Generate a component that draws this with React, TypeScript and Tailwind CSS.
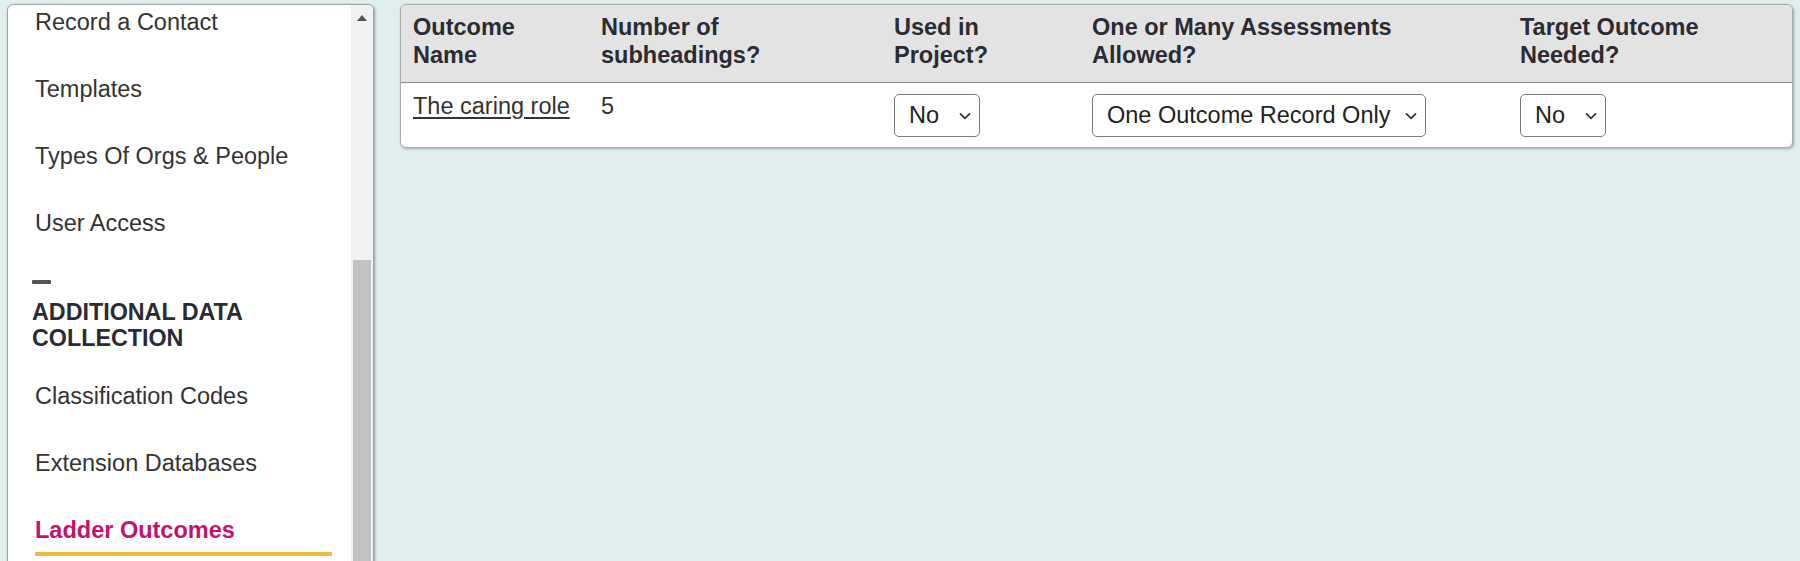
import React from "react";

function Chevron() {
  return (
    <svg width="12" height="8" viewBox="0 0 12 8" className="shrink-0">
      <path d="M1.5 1.8l4.5 4.5 4.5-4.5" fill="none" stroke="#333" strokeWidth="1.7" strokeLinecap="round" strokeLinejoin="round" />
    </svg>
  );
}

function Select({ value, width }: { value: string; width: string }) {
  return (
    <div
      className={`mt-[1px] inline-flex h-[43px] ${width} items-center justify-between rounded-[5px] border border-[#7a7a7a] bg-white pl-[14px] pr-[8px] text-[23.5px] text-[#222]`}
    >
      <span>{value}</span>
      <Chevron />
    </div>
  );
}

const items1 = ["Record a Contact", "Templates", "Types Of Orgs & People", "User Access"];
const items2 = ["Classification Codes", "Extension Databases"];

export default function App() {
  return (
    <div className="flex h-[561px] w-[1800px] items-start overflow-hidden bg-[#e0eeee] pt-[4px] font-['Liberation_Sans',Arial,sans-serif] text-[#333]">
      <aside className="ml-[7px] flex h-[600px] w-[367px] shrink-0 overflow-hidden rounded-[6px] border border-[#9ca4a4] bg-white shadow-[1px_1px_3px_rgba(0,0,0,0.35)]">
        <div className="flex-1 overflow-hidden">
          <div className="-mt-[17px]">
            {items1.map((t) => (
              <div key={t} className="ml-[27px] py-[20.65px] text-[23.5px] leading-[26px] text-[#333]">
                {t}
              </div>
            ))}
            <div className="ml-[24px] mt-[23px] h-[4px] w-[19px] rounded-[1px] bg-[#555]" />
            <div className="ml-[24px] mt-[14.5px] text-[23.3px] font-bold leading-[26px] text-[#2b2b33]">
              ADDITIONAL DATA
              <br />
              COLLECTION
            </div>
            <div className="mt-[11.35px]">
              {items2.map((t) => (
                <div key={t} className="ml-[27px] py-[20.65px] text-[23.5px] leading-[26px] text-[#333]">
                  {t}
                </div>
              ))}
              <div className="ml-[27px] w-[297px] border-b-4 border-[#f0b93a] pb-[9px] pt-[20.65px] text-[23.5px] font-bold leading-[26px] text-[#c4136c]">
                Ladder Outcomes
              </div>
            </div>
          </div>
        </div>
        <div className="flex w-[22px] flex-col bg-[#f1f1f1]">
          <div className="flex h-[255px] justify-center pt-[10px]">
            <svg width="10" height="6" viewBox="0 0 10 6">
              <path d="M0 6L5 0L10 6Z" fill="#505050" />
            </svg>
          </div>
          <div className="mx-[2px] flex-1 bg-[#c1c1c1]" />
        </div>
      </aside>

      <main className="ml-[26px] w-[1393px] shrink-0 overflow-hidden rounded-[6px] border border-[#a6abab] bg-white shadow-[1px_1px_3px_rgba(0,0,0,0.3)]">
        <div className="grid grid-cols-[188px_293px_198px_428px_1fr] border-b border-[#8a8a8a] bg-[#e3e3e3] pb-[13px] pt-[9px] text-[23.5px] font-bold leading-[27.5px] text-[#2b2b33]">
          <div className="px-[12px]">
            Outcome
            <br />
            Name
          </div>
          <div className="px-[12px]">
            Number of
            <br />
            subheadings?
          </div>
          <div className="px-[12px]">
            Used in
            <br />
            Project?
          </div>
          <div className="px-[12px]">
            One or Many Assessments
            <br />
            Allowed?
          </div>
          <div className="px-[12px]">
            Target Outcome
            <br />
            Needed?
          </div>
        </div>
        <div className="grid grid-cols-[188px_293px_198px_428px_1fr] items-start pb-[10px] pt-[10px] text-[23.5px] leading-[27.5px] text-[#333]">
          <div className="px-[12px]">
            <a className="underline underline-offset-[3px]">The caring role</a>
          </div>
          <div className="px-[12px]">5</div>
          <div className="px-[12px]">
            <Select value="No" width="w-[86px]" />
          </div>
          <div className="px-[12px]">
            <Select value="One Outcome Record Only" width="w-[334px]" />
          </div>
          <div className="px-[12px]">
            <Select value="No" width="w-[86px]" />
          </div>
        </div>
      </main>
    </div>
  );
}
